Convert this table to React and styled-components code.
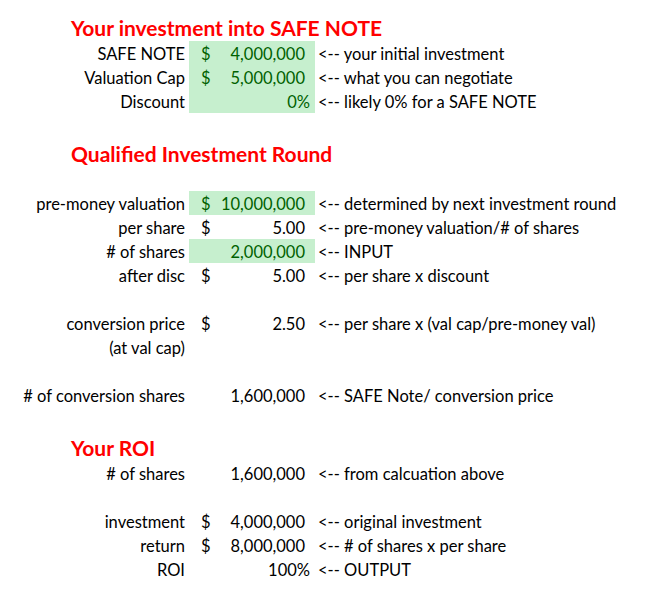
import styled, { createGlobalStyle } from "styled-components";

const GlobalStyle = createGlobalStyle`
  body {
    margin: 0;
    background: #ffffff;
    font-family: Lato, "Open Sans", sans-serif;
    color: #000000;
  }
`;

const sections = [
  {
    title: "Your investment into SAFE NOTE",
    rows: [
      { label: "SAFE NOTE", cur: true, value: "4,000,000", good: true, note: "<-- your initial investment" },
      { label: "Valuation Cap", cur: true, value: "5,000,000", good: true, note: "<-- what you can negotiate" },
      { label: "Discount", value: "0%", pct: true, good: true, note: "<-- likely 0% for a SAFE NOTE" },
      {},
    ],
  },
  {
    title: "Qualified Investment Round",
    rows: [
      {},
      { label: "pre-money valuation", cur: true, value: "10,000,000", good: true, note: "<-- determined by next investment round" },
      { label: "per share", cur: true, value: "5.00", note: "<-- pre-money valuation/# of shares" },
      { label: "# of shares", value: "2,000,000", good: true, note: "<-- INPUT" },
      { label: "after disc", cur: true, value: "5.00", note: "<-- per share x discount" },
      {},
      { label: "conversion price", cur: true, value: "2.50", note: "<-- per share x (val cap/pre-money val)" },
      { label: "(at val cap)" },
      {},
      { label: "# of conversion shares", value: "1,600,000", note: "<-- SAFE Note/ conversion price" },
      {},
    ],
  },
  {
    title: "Your ROI",
    rows: [
      { label: "# of shares", value: "1,600,000", note: "<-- from calcuation above" },
      {},
      { label: "investment", cur: true, value: "4,000,000", note: "<-- original investment" },
      { label: "return", cur: true, value: "8,000,000", note: "<-- # of shares x per share" },
      { label: "ROI", value: "100%", pct: true, note: "<-- OUTPUT" },
    ],
  },
];

const Sheet = styled.main`
  padding-top: 11px;
  width: 656px;
  height: 600px;
  box-sizing: border-box;
  font-size: 16.5px;
`;

const Title = styled.h2`
  margin: 0;
  height: 30px;
  padding-left: 71px;
  display: flex;
  align-items: flex-end;
  padding-bottom: 1px;
  box-sizing: border-box;
  color: #ff0000;
  font-size: 21px;
  font-weight: 700;
  white-space: nowrap;
`;

const Row = styled.div`
  display: grid;
  grid-template-columns: 189px 126px 1fr;
  height: 24px;
  align-items: stretch;
  white-space: nowrap;

  & > div {
    padding-top: 2px;
    box-sizing: border-box;
  }
`;

const Label = styled.div`
  text-align: right;
  padding-right: 4px;
  display: flex;
  align-items: center;
  justify-content: flex-end;
`;

const Value = styled.div`
  display: flex;
  align-items: center;
  justify-content: space-between;
  padding-left: 12px;
  padding-right: ${(p) => (p.$pct ? "5px" : "10px")};
  background: ${(p) => (p.$good ? "#c6efce" : "transparent")};
  color: ${(p) => (p.$good ? "#006100" : "#000000")};
`;

const Note = styled.div`
  padding-left: 3px;
  display: flex;
  align-items: center;
`;

function SheetRow({ row }) {
  return (
    <Row>
      <Label>{row.label}</Label>
      <Value $good={row.good} $pct={row.pct}>
        <span>{row.cur ? "$" : ""}</span>
        <span>{row.value}</span>
      </Value>
      <Note>{row.note}</Note>
    </Row>
  );
}

export default function App() {
  return (
    <>
      <GlobalStyle />
      <Sheet>
        {sections.map((section) => (
          <section key={section.title}>
            <Title>{section.title}</Title>
            {section.rows.map((row, idx) => (
              <SheetRow key={idx} row={row} />
            ))}
          </section>
        ))}
      </Sheet>
    </>
  );
}
